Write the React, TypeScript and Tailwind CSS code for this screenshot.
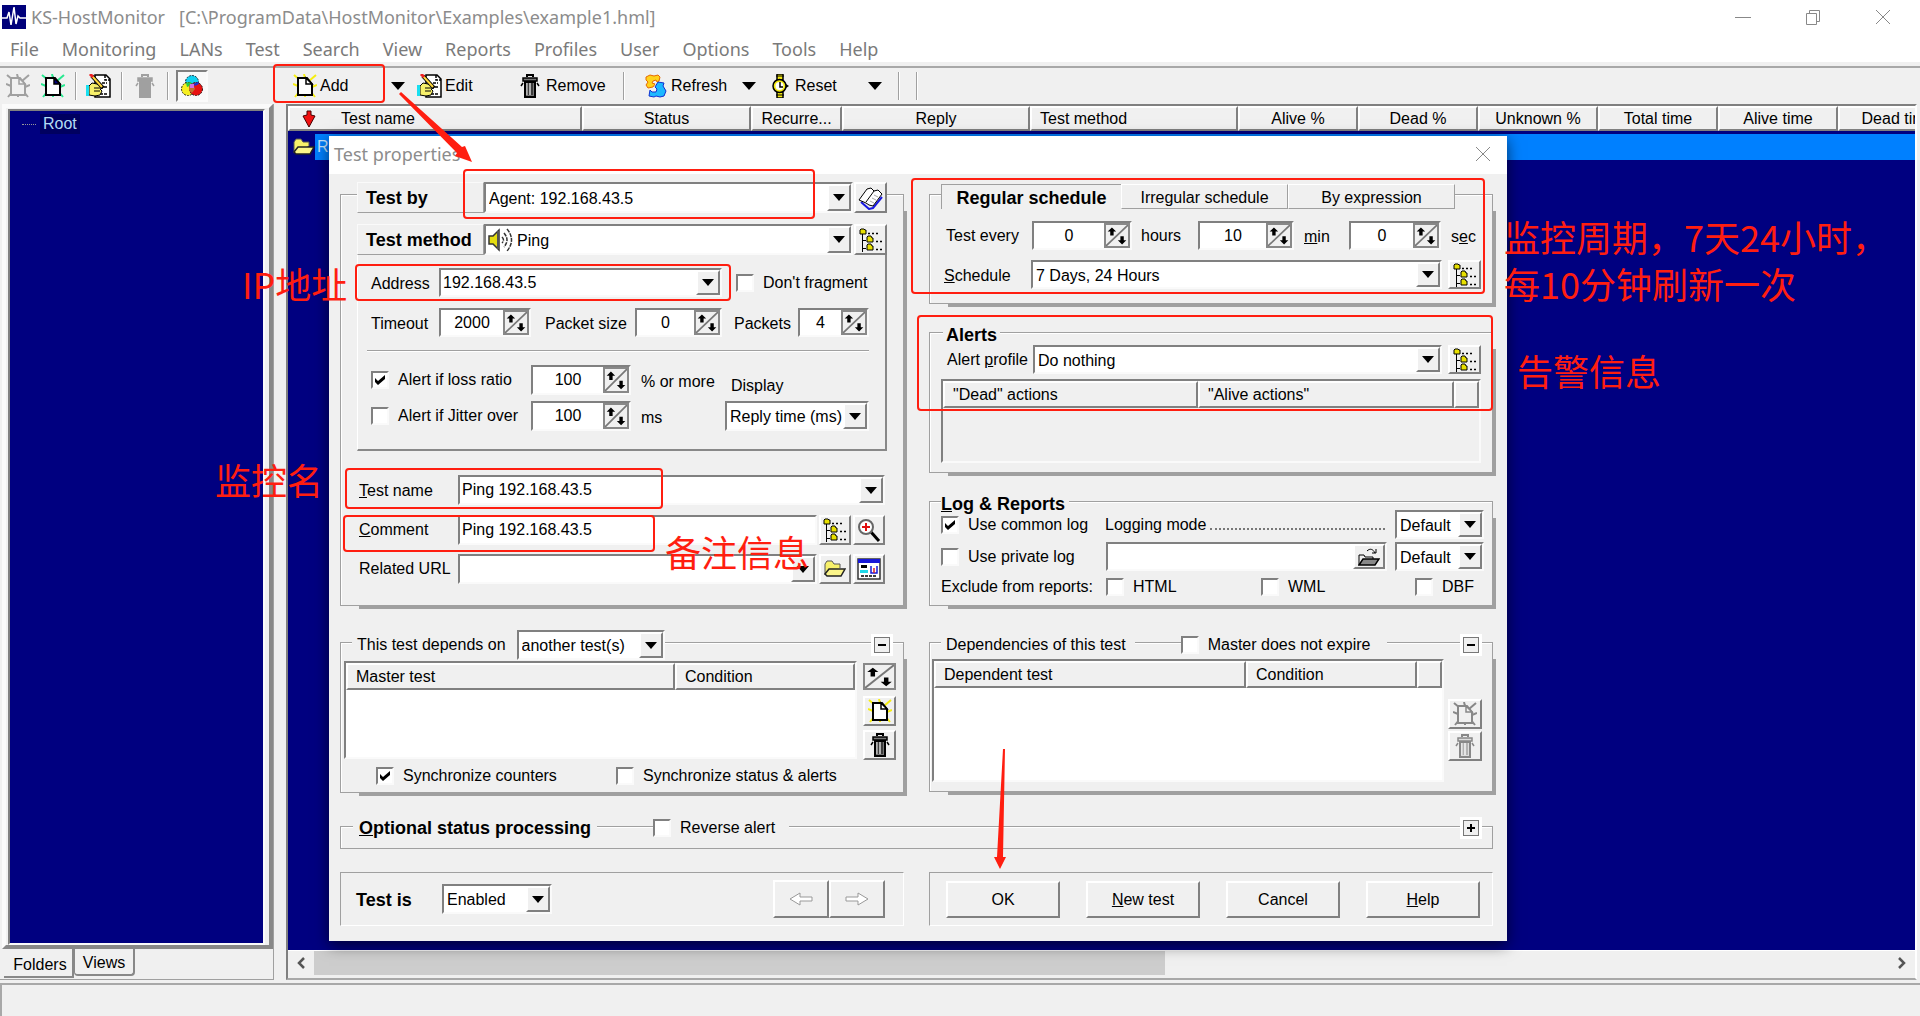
import type { ReactNode } from 'react';
import clsx from 'clsx';

const SUNKEN = 'border-2 border-t-[#808080] border-l-[#808080] border-r-[#fafafa] border-b-[#fafafa]';
const RAISED = 'border-2 border-t-white border-l-white border-r-[#808080] border-b-[#808080]';

const MENU = ['File', 'Monitoring', 'LANs', 'Test', 'Search', 'View', 'Reports', 'Profiles', 'User', 'Options', 'Tools', 'Help'];

/* ---------- icons ---------- */

function NewSheetIcon({ burst, line = '#000', fill = '#fff', fold = fill }: { burst: string; line?: string; fill?: string; fold?: string }) {
  return (
    <svg viewBox="0 0 24 24" className="size-6 shrink-0" fill="none">
      <path d="M1 1l6 5M11 0l1 4M23 1l-7 6M0 10l5 2M19 13l5-2M2 23l4-5M12 19v4M22 23l-4-5" stroke={burst} strokeWidth="2" />
      <path d="M5 4h9l5 6v11H5z" fill={fill} stroke={line} strokeWidth="2" />
      <path d="M13 4v6h6z" fill={fold} stroke={line} strokeWidth="1.5" />
    </svg>
  );
}

function EditIcon() {
  return (
    <svg viewBox="0 0 26 24" className="h-6 w-[26px] shrink-0" fill="none">
      <path d="M9 1h11l4 4v18H9z" fill="#fff" stroke="#000" strokeWidth="1.5" />
      <path d="M19 1v5h5M16 9h5M18 13h4M14 20h8" stroke="#000" strokeWidth="1.5" strokeDasharray="3 1" />
      <path d="M3 12l3-3 5 1 6 2v2l-3 1 2 2-2 4-5 1-6-1z" fill="#f7f06a" stroke="#000" />
      <path d="M8 14h6M8 17h6" stroke="#000" />
      <path d="M0 11h3v11H0z" fill="#19dff0" />
      <path d="M6 2l11 12" stroke="#000" strokeWidth="4" />
      <path d="M6 2l10 11" stroke="#ffd83c" strokeWidth="2" />
      <path d="M4 0l3 3" stroke="#e22" strokeWidth="3" />
    </svg>
  );
}

function TrashIcon({ color = '#000', body = '#777' }: { color?: string; body?: string }) {
  return (
    <svg viewBox="0 0 20 24" className="h-6 w-5 shrink-0" fill="none">
      <path d="M7 3V1h6v2" stroke={color} strokeWidth="2" />
      <path d="M3 4h14v3H3z" fill={body} stroke={color} strokeWidth="1.5" />
      <path d="M3 9l-2 3M17 9l2 3" stroke={color} strokeWidth="1.5" />
      <path d="M5 8h10v15H5z" fill={body} stroke={color} strokeWidth="2" />
      <path d="M8 9v12M12 9v12" stroke={color} strokeWidth="1" />
      <path d="M7 9v12M10 9v12" stroke={color === body ? body : '#eee'} strokeWidth="1" />
    </svg>
  );
}

function ColorsIcon() {
  return (
    <svg viewBox="0 0 24 24" className="size-6">
      <circle cx="12" cy="8" r="6.500" fill="#10d0f0" stroke="#134" strokeDasharray="2 1" />
      <circle cx="8" cy="15" r="6.500" fill="#f5ee20" stroke="#331" strokeDasharray="2 1" />
      <circle cx="16" cy="15" r="6.500" fill="#e81010" stroke="#311" strokeDasharray="2 1" />
      <path d="M6 9l5-1 1 3-5 2z" fill="#28c840" />
      <path d="M13 10l5-2 1 2-4 2z" fill="#2030d0" />
      <path d="M9 11l4-1 2 5-3 4-3-3z" fill="#c07030" />
      <path d="M10 10h4v4h-4z" fill="#d070e0" />
    </svg>
  );
}

function RefreshIcon() {
  return (
    <svg viewBox="0 0 22 24" className="h-6 w-[22px] shrink-0">
      <path d="M1 3l4-2 4 1 4-1 2 2-1 4-2 1-1-2-3 1-1 2 3 1-2 3-5 1-2-3 2-3-2-2z" fill="#ffd21c" stroke="#e66a00" />
      <path d="M13 8l6 1-1 3 3 5-2 5-4 1-4-1-2 1-5-1 1-6 2 2 4 0 1-3-2-2z" fill="#1cb8ff" stroke="#1030d0" />
    </svg>
  );
}

function WatchIcon() {
  return (
    <svg viewBox="0 0 18 24" className="h-6 w-[18px] shrink-0">
      <path d="M6 0h6v6H6zM6 18h6v6H6z" fill="#f4ea10" stroke="#000" strokeWidth="1.500" />
      <path d="M5 2h8M5 21h8" stroke="#000" />
      <circle cx="8.500" cy="12" r="6.500" fill="#f4ea10" stroke="#000" strokeWidth="1.500" />
      <circle cx="8.500" cy="12" r="4" fill="#fff" />
      <path d="M9 8v5h3" fill="none" stroke="#000" strokeWidth="1.500" />
      <path d="M15 10l3 2-3 2z" />
    </svg>
  );
}

function BookIcon() {
  return (
    <svg viewBox="0 0 26 24" className="h-6 w-[26px]">
      <path d="M3 16l8 7 4-1 9-11" fill="none" stroke="#1818e0" strokeWidth="2" />
      <path d="M1 14L9 3l4-1 3 3 4-1 4 4-9 12-4-1-3-2z" fill="#fff" stroke="#000" strokeWidth="1" />
      <path d="M8 16l8-11" stroke="#000" />
      <path d="M14 12l4 2M16 9l4 2M12 15l4 2" stroke="#aaa" />
    </svg>
  );
}

function TreeIcon() {
  return (
    <svg viewBox="0 0 24 24" className="size-6" fill="none">
      <path d="M3.500 5v19M3 12.500h4M3 20.500h4" stroke="#000" strokeWidth="1" />
      <path d="M2 1h3l1 1h1v4H1V2zM9 8h3l1 2h1v4H8V9zM9 16h3l1 2h1v4H8v-5z" fill="#e8e000" stroke="#000" strokeWidth="1" />
      <path d="M9 5.500h2M13 5.500h2M17 5.500h2M17 13.500h2M21 13.500h2M17 21.500h2M21 21.500h2" stroke="#000" strokeWidth="1.500" />
    </svg>
  );
}

function ZoomIcon() {
  return (
    <svg viewBox="0 0 24 24" className="size-6" fill="none">
      <path d="M14 14l8 9" stroke="#000" strokeWidth="3" />
      <circle cx="9" cy="9" r="7" fill="#fff" stroke="#666" strokeWidth="2" />
      <path d="M9 5v8M5 9h8" stroke="#e01010" strokeWidth="2" />
    </svg>
  );
}

function FolderIcon() {
  return (
    <svg viewBox="0 0 22 18" className="h-[18px] w-[22px]">
      <path d="M1 15V4l2-3h5l2 3h6v4" fill="#f7f06a" stroke="#555" strokeWidth="1" />
      <path d="M3 16l-2-2 4-5h16l-4 7z" fill="#fbf58a" stroke="#222" strokeWidth="1.500" />
    </svg>
  );
}

function OpenIcon() {
  return (
    <svg viewBox="0 0 22 18" className="h-[18px] w-[22px]">
      <path d="M1 17V7h5l1 2h8v2" fill="#eee" stroke="#000" strokeWidth="1" />
      <path d="M1 17l4-6h16l-4 6z" fill="#888" stroke="#000" strokeWidth="1.500" />
      <path d="M9 3c3-3 6-2 8 2M18 1v4h-4" fill="none" stroke="#000" strokeWidth="1" />
    </svg>
  );
}

function ReportIcon() {
  return (
    <svg viewBox="0 0 24 22" className="h-[22px] w-6">
      <path d="M1 1h22v20H1z" fill="#fff" stroke="#333" strokeWidth="1.500" />
      <path d="M1 1h22v4H1z" fill="#1818d8" />
      <path d="M4 7h6v3H4z" />
      <path d="M3 12h8v3H3z" fill="#20d8e8" />
      <path d="M14 8v7h6V8" fill="none" stroke="#1818d8" strokeWidth="1.500" />
      <path d="M17 10v5" stroke="#e02020" strokeWidth="1.500" />
      <path d="M4 18h16" stroke="#000" strokeWidth="1.500" strokeDasharray="3 1" />
    </svg>
  );
}

function SpeakerIcon() {
  return (
    <svg viewBox="0 0 26 24" className="h-6 w-[26px] shrink-0">
      <path d="M1 8h4l6-6v20l-6-6H1z" fill="#e4dc10" stroke="#333" strokeWidth="1.500" />
      <path d="M10 3v18" stroke="#555" strokeWidth="2" />
      <path d="M14 9c2 2 2 4 0 6M16 5c4 5 4 9 0 14M19 1c6 7 6 15 0 22" fill="none" stroke="#333" strokeDasharray="4 1" strokeWidth="1.500" />
    </svg>
  );
}

function SwapIcon() {
  return (
    <svg viewBox="0 0 26 26" preserveAspectRatio="none" className="h-full w-full">
      <path d="M0 26L26 0" stroke="#777" strokeWidth="2" />
      <path d="M7 3l-5 5h3v5h4V8h3zM19 24l5-5h-3v-5h-4v5h-3z" />
    </svg>
  );
}

function CloseIcon() {
  return (
    <svg viewBox="0 0 16 16" className="size-4" fill="none" stroke="#888">
      <path d="M1 1l14 14M15 1L1 15" />
    </svg>
  );
}

function DownTriangle() {
  return (
    <svg viewBox="0 0 14 8" className="h-2 w-[14px]">
      <path d="M0 0h14L7 8z" />
    </svg>
  );
}

/* ---------- controls ---------- */

function ArrowFace() {
  return (
    <svg viewBox="0 0 12 7" className="h-[7px] w-3">
      <path d="M0 0h12L6 7z" />
    </svg>
  );
}

function Select({ id, value, className, icon, label }: { id: string; value: string; className?: string; icon?: ReactNode; label?: string }) {
  return (
    <div className={clsx('flex items-center bg-white', SUNKEN, className)}>
      {icon}
      <select id={id} aria-label={label} className="h-full min-w-0 flex-1 appearance-none pt-[2px] pl-[3px] outline-none">
        <option>{value}</option>
      </select>
      <span className={clsx('pointer-events-none grid h-full w-6 shrink-0 place-items-center bg-[#f0f0f0]', RAISED)}>
        <ArrowFace />
      </span>
    </div>
  );
}

function ComboInput({ id, value, className }: { id: string; value: string; className?: string }) {
  return (
    <div className={clsx('flex items-center bg-white', SUNKEN, className)}>
      <input id={id} type="text" defaultValue={value} className="h-full min-w-0 flex-1 pl-[2px] outline-none" />
      <button type="button" aria-label="Open list" className={clsx('grid h-full w-6 shrink-0 place-items-center bg-[#f0f0f0]', RAISED)}>
        <ArrowFace />
      </button>
    </div>
  );
}

function Spinner({ id, value, className }: { id: string; value: string; className?: string }) {
  return (
    <div className={clsx('flex shrink-0 items-stretch bg-white', SUNKEN, className)}>
      <input id={id} type="text" defaultValue={value} className="min-w-0 flex-1 text-center outline-none" />
      <button type="button" aria-label="Change value" className="w-[26px] shrink-0 border-2 border-[#888] bg-[#f0f0f0]">
        <SwapIcon />
      </button>
    </div>
  );
}

function Check({ children, checked, className }: { children: ReactNode; checked?: boolean; className?: string }) {
  return (
    <label className={clsx('flex items-center gap-[9px] whitespace-nowrap', className)}>
      <span className={clsx('grid size-[18px] shrink-0 place-items-center bg-white', SUNKEN)}>
        <input type="checkbox" defaultChecked={checked} className="peer col-start-1 row-start-1 size-full appearance-none" />
        <svg viewBox="0 0 12 12" className="pointer-events-none col-start-1 row-start-1 hidden size-3 peer-checked:block">
          <path d="M1 4l3 3 7-6v4l-7 6-3-3z" />
        </svg>
      </span>
      {children}
    </label>
  );
}

function IconButton({ label, children, className }: { label: string; children: ReactNode; className?: string }) {
  return (
    <button type="button" aria-label={label} className={clsx('grid shrink-0 place-items-center bg-[#f0f0f0]', RAISED, className)}>
      {children}
    </button>
  );
}

function PushButton({ children }: { children: ReactNode }) {
  return (
    <button type="button" className={clsx('h-[37px] w-[114px] bg-[#f0f0f0] pt-[2px]', RAISED)}>
      {children}
    </button>
  );
}

function Group({ children, className }: { children: ReactNode; className?: string }) {
  return (
    <section
      className={clsx(
        'relative border border-[#a0a0a0] shadow-[inset_1px_1px_0_#fff]',
        'before:absolute before:top-4 before:-right-[4px] before:-bottom-[4px] before:w-[3px] before:bg-[#a0a0a0]',
        'after:absolute after:-right-[4px] after:-bottom-[4px] after:left-[18px] after:h-[3px] after:bg-[#a0a0a0]',
        className,
      )}
    >
      {children}
    </section>
  );
}

function Fold({ sign }: { sign: string }) {
  return (
    <button type="button" aria-label="Fold section" className="relative grid size-[22px] place-items-center border-4 border-white bg-[#f0f0f0] outline-1 -outline-offset-4 outline-[#777]">
      <svg viewBox="0 0 10 10" className="size-[10px]" stroke="#000" strokeWidth="2">
        <path d={sign === '+' ? 'M1 5h8M5 1v8' : 'M1 5h8'} />
      </svg>
    </button>
  );
}

function ListTable({ heads, cols, className, label }: { heads: string[]; cols: string[]; className?: string; label: string }) {
  return (
    <div className={clsx('overflow-hidden', SUNKEN, className)}>
      <table aria-label={label} className="w-full table-fixed border-separate border-spacing-0">
        <thead>
          <tr>
            {heads.map((head, i) => (
              <th key={i} className={clsx('h-[27px] bg-[#f0f0f0] pl-2 text-left font-normal', RAISED, cols[i])}>
                {head}
              </th>
            ))}
          </tr>
        </thead>
      </table>
    </div>
  );
}

/* ---------- main window ---------- */

function TitleBar() {
  return (
    <header className="bg-white">
      <div className="flex h-9 items-center pb-[3px] pl-[2px] font-['Noto_Sans','Open_Sans',sans-serif] text-[18px] text-[#8c8c8c]">
        <svg viewBox="0 0 24 24" className="size-6 bg-[#00007a]" fill="none" stroke="#fff" strokeWidth="1.500">
          <path d="M0 13h5l2-6 2 13 3-18 2 17 2-8 2 2h6" />
        </svg>
        <h1 className="ml-[5px] whitespace-pre">KS-HostMonitor   [C:\ProgramData\HostMonitor\Examples\example1.hml]</h1>
        <div className="ml-auto flex items-center gap-[54px] pr-[29px]">
          <button type="button" aria-label="Minimize">
            <svg viewBox="0 0 16 16" className="size-4" stroke="#888"><path d="M0 8.500h16" /></svg>
          </button>
          <button type="button" aria-label="Restore">
            <svg viewBox="0 0 16 16" className="size-4" fill="none" stroke="#888"><path d="M1.500 4.500h10v11h-10zM4.500 4.500v-3h10v11h-3" /></svg>
          </button>
          <button type="button" aria-label="Close"><CloseIcon /></button>
        </div>
      </div>
      <nav className="flex h-[26px] items-center gap-[23px] pl-[10px] font-['Noto_Sans','Open_Sans',sans-serif] text-[18px] text-[#7a7a7a]">
        {MENU.map(item => <button key={item} type="button">{item}</button>)}
      </nav>
    </header>
  );
}

function Separator({ className }: { className?: string }) {
  return <span className={clsx('h-7 w-[2px] shrink-0 border-r border-white bg-[#a0a0a0]', className)} />;
}

function ToolBar() {
  return (
    <div className="bg-[#f0f0f0] pt-1">
      <div className="flex h-[38px] items-center border-t-2 border-[#a8a8a8]">
        <div className="flex w-[290px] shrink-0 items-center pl-[6px]">
          <button type="button" aria-label="New subfolder"><NewSheetIcon burst="#a0a0a0" line="#a0a0a0" fill="#f0f0f0" /></button>
          <button type="button" aria-label="New folder" className="ml-[11px]"><NewSheetIcon burst="#28e890" fold="#000080" /></button>
          <Separator className="ml-[10px]" />
          <button type="button" aria-label="Edit folder" className="ml-[9px]"><EditIcon /></button>
          <Separator className="ml-[9px]" />
          <button type="button" aria-label="Remove folder" className="ml-[12px]"><TrashIcon color="#a0a0a0" body="#a0a0a0" /></button>
          <Separator className="ml-[12px]" />
          <button type="button" aria-label="Colors" className={clsx('ml-[7px] grid size-8 place-items-center bg-[#f8f8f8]', SUNKEN)}><ColorsIcon /></button>
        </div>
        <button type="button" className="flex w-[98px] items-center gap-[3px] pl-[3px]"><NewSheetIcon burst="#f6ee10" />Add</button>
        <button type="button" aria-label="Add menu" className="w-[27px] pl-[3px]"><DownTriangle /></button>
        <button type="button" className="flex w-[105px] items-center gap-[2px] pl-[2px]"><EditIcon />Edit</button>
        <button type="button" className="flex w-[103px] items-center gap-[6px]"><TrashIcon />Remove</button>
        <Separator />
        <button type="button" className="ml-[20px] flex w-[97px] items-center gap-1"><RefreshIcon />Refresh</button>
        <button type="button" aria-label="Refresh menu" className="w-[29px]"><DownTriangle /></button>
        <button type="button" className="flex w-[97px] items-center gap-[6px]"><WatchIcon />Reset</button>
        <button type="button" aria-label="Reset menu"><DownTriangle /></button>
        <Separator className="ml-[16px]" />
        <Separator className="ml-[16px]" />
      </div>
    </div>
  );
}

function FolderPane() {
  return (
    <aside className="flex w-[274px] shrink-0 flex-col border-r border-b border-[#a0a0a0]">
      <div className="ml-[2px] flex flex-1 flex-col border-4 border-t-[#fafafa] border-r-[#888] border-b-[#888] border-l-[#fafafa] pt-px pr-1 pl-[2px]">
        <div className={clsx('flex-1 bg-[#000080] text-[#b4dcf4]', SUNKEN)}>
          <div className="flex items-center pt-[3px] pl-[12px]">
            <span className="w-[14px] border-t border-dotted border-[#999]" />
            <span className="ml-1 bg-[#000060] px-[3px]">Root</span>
          </div>
        </div>
      </div>
      <div className="flex h-[30px] items-start pl-1">
        <button type="button" className="h-[29px] w-[70px] border-r-2 border-b-2 border-[#888] pt-1 pl-1">Folders</button>
        <button type="button" className="h-[27px] w-[61px] rounded-b border-r-2 border-b-2 border-l border-[#888] pt-[2px]">Views</button>
      </div>
    </aside>
  );
}

const COLUMNS = [
  { name: 'Test name', cls: 'w-[294px] text-left' },
  { name: 'Status', cls: 'w-[169px] text-center' },
  { name: 'Recurre...', cls: 'w-[91px] text-center' },
  { name: 'Reply', cls: 'w-[188px] text-center' },
  { name: 'Test method', cls: 'w-[208px] text-left pl-2' },
  { name: 'Alive %', cls: 'w-[120px] text-center' },
  { name: 'Dead %', cls: 'w-[120px] text-center' },
  { name: 'Unknown %', cls: 'w-[120px] text-center' },
  { name: 'Total time', cls: 'w-[120px] text-center' },
  { name: 'Alive time', cls: 'w-[120px] text-center' },
  { name: 'Dead time', cls: 'w-[120px] text-center' },
];

function TestList() {
  return (
    <main className="mr-[3px] ml-3 flex min-w-0 flex-1 flex-col border-2 border-t-[#808080] border-r-white border-b-[#a8a8a8] border-l-[#808080]">
      <div className="flex-1 overflow-hidden bg-[#000080]">
        <table className="w-[1670px] table-fixed border-separate border-spacing-0">
          <thead>
            <tr>
              {COLUMNS.map((col, i) => (
                <th key={col.name} className={clsx('h-[25px] bg-[#f0f0f0] font-normal', RAISED, col.cls)}>
                  {i === 0 ? (
                    <span className="flex items-center gap-[25px] pl-3">
                      <svg viewBox="0 0 14 18" className="h-[18px] w-[14px]"><path d="M5 1h4v4l4 1-6 11L1 6l4-1z" fill="#f01010" stroke="#400" /></svg>
                      {col.name}
                    </span>
                  ) : col.name}
                </th>
              ))}
            </tr>
          </thead>
          <tbody>
            <tr>
              <td colSpan={11} className="p-0 pt-[3px]">
                <div className="flex items-center pl-[5px]">
                  <span className="w-[22px] shrink-0"><FolderIcon /></span>
                  <span className="h-[26px] flex-1 bg-[#0080ff] pl-[2px] leading-[26px] text-[#c4e4ff]">R</span>
                </div>
              </td>
            </tr>
          </tbody>
        </table>
      </div>
      <div className="flex h-[28px] items-start border-t border-white bg-[#f0f0f0]">
        <button type="button" aria-label="Scroll left" className="grid h-6 w-[26px] place-items-center">
          <svg viewBox="0 0 8 12" className="h-3 w-2" fill="none" stroke="#555" strokeWidth="2.500"><path d="M7 1L2 6l5 5" /></svg>
        </button>
        <div className="flex h-6 flex-1"><span className="w-[54%] bg-[#cdcdcd]" /></div>
        <button type="button" aria-label="Scroll right" className="grid h-6 w-[26px] place-items-center">
          <svg viewBox="0 0 8 12" className="h-3 w-2" fill="none" stroke="#555" strokeWidth="2.500"><path d="M1 1l5 5-5 5" /></svg>
        </button>
      </div>
    </main>
  );
}

/* ---------- dialog ---------- */

function MethodPanel() {
  return (
    <div className="border-r-2 border-b-2 border-l border-[#888] border-l-white pt-[13px] pr-4 pb-[18px] pl-[13px]">
      <div className="flex h-[29px] items-center">
        <label htmlFor="address" className="w-[68px] shrink-0 pt-[3px]">Address</label>
        <ComboInput id="address" value="192.168.43.5" className="h-full w-[283px]" />
        <Check className="ml-[14px]">Don't fragment</Check>
      </div>
      <div className="mt-[11px] flex h-[29px] items-center">
        <label htmlFor="timeout" className="w-[68px] shrink-0 pt-[3px]">Timeout</label>
        <Spinner id="timeout" value="2000" className="h-full w-[92px]" />
        <label htmlFor="packet-size" className="ml-[14px] w-[90px] shrink-0 pt-[3px]">Packet size</label>
        <Spinner id="packet-size" value="0" className="h-full w-[87px]" />
        <label htmlFor="packets" className="ml-[12px] w-[64px] shrink-0 pt-[3px]">Packets</label>
        <Spinner id="packets" value="4" className="h-full w-[71px]" />
      </div>
      <hr className="mt-[13px] -ml-1 border-t border-b border-t-[#a0a0a0] border-b-white" />
      <div className="mt-[13px] grid grid-cols-[160px_100px_94px_1fr] items-center gap-y-[6px]">
        <Check checked>Alert if loss ratio</Check>
        <Spinner id="loss" value="100" className="h-[30px]" />
        <label htmlFor="loss" className="pt-[3px] pl-[10px]">% or more</label>
        <label htmlFor="display" className="self-end pl-[6px] leading-[18px]">Display</label>
        <Check>Alert if Jitter over</Check>
        <Spinner id="jitter" value="100" className="h-[30px]" />
        <label htmlFor="jitter" className="pt-[3px] pl-[10px]">ms</label>
        <Select id="display" value="Reply time (ms)" className="h-[30px]" />
      </div>
    </div>
  );
}

function TestGroup() {
  return (
    <Group className="px-4 pb-[21px]">
      <div className="-mt-[13px] flex h-[31px] items-center bg-[#f0f0f0]">
        <label htmlFor="test-by" className="flex h-full w-[127px] shrink-0 items-center border border-t-[#fafafa] border-r-[#a0a0a0] border-b-[#a0a0a0] border-l-[#fafafa] pl-2 text-[18px] font-bold">Test by</label>
        <Select id="test-by" value="Agent: 192.168.43.5" className="h-full flex-1" />
        <IconButton label="Agents" className="ml-[1px] h-full w-[33px]"><BookIcon /></IconButton>
      </div>
      <div className="mt-[11px] flex h-[31px] items-center">
        <label htmlFor="test-method" className="flex h-full w-[127px] shrink-0 items-center border border-t-[#fafafa] border-r-[#a0a0a0] border-b-[#a0a0a0] border-l-[#fafafa] pl-2 text-[18px] font-bold">Test method</label>
        <Select id="test-method" value="Ping" icon={<SpeakerIcon />} className="h-full flex-1 pl-[2px]" />
        <IconButton label="Test methods" className="ml-[1px] h-full w-[33px]"><TreeIcon /></IconButton>
      </div>
      <MethodPanel />
      <div className="mt-6 flex h-[30px] items-center pr-[2px] pl-[2px]">
        <label htmlFor="test-name" className="w-[99px] shrink-0 pt-[2px]"><u>T</u>est name</label>
        <ComboInput id="test-name" value="Ping 192.168.43.5" className="h-full flex-1" />
      </div>
      <div className="mt-[10px] flex h-[30px] items-center pr-[2px] pl-[2px]">
        <label htmlFor="comment" className="w-[99px] shrink-0"><u>C</u>omment</label>
        <input id="comment" type="text" defaultValue="Ping 192.168.43.5" className={clsx('h-full min-w-0 flex-1 bg-white pl-[2px] outline-none', SUNKEN)} />
        <IconButton label="Macros" className="ml-[2px] h-full w-8"><TreeIcon /></IconButton>
        <IconButton label="Preview" className="ml-[2px] h-full w-8"><ZoomIcon /></IconButton>
      </div>
      <div className="mt-[9px] flex h-[30px] items-center pr-[2px] pl-[2px]">
        <label htmlFor="related-url" className="w-[99px] shrink-0">Related URL</label>
        <ComboInput id="related-url" value="" className="h-full flex-1" />
        <IconButton label="Browse" className="ml-[2px] h-full w-8"><FolderIcon /></IconButton>
        <IconButton label="Open page" className="ml-[2px] h-full w-8"><ReportIcon /></IconButton>
      </div>
    </Group>
  );
}

function ScheduleGroup() {
  return (
    <Group className="pr-[11px] pb-[14px] pl-[11px]">
      <div className="-mt-[11px] flex h-[25px] w-[514px] bg-[#f0f0f0]">
        <button type="button" className="w-[180px] border-t border-l border-[#a0a0a0] pt-[2px] text-[18px] font-bold">Regular schedule</button>
        <button type="button" className="w-[167px] border border-t-white border-r-[#a0a0a0] border-b-[#a0a0a0] border-l-white pt-[2px]">Irregular schedule</button>
        <button type="button" className="w-[167px] border border-t-white border-r-[#a0a0a0] border-b-[#a0a0a0] border-l-white pt-[2px]">By expression</button>
      </div>
      <div className="mt-[12px] flex h-[29px] items-center pl-[5px]">
        <label htmlFor="hours" className="w-[86px] shrink-0">Test every</label>
        <Spinner id="hours" value="0" className="h-full w-[100px]" />
        <label htmlFor="hours" className="w-[66px] shrink-0 pl-[9px]">hours</label>
        <Spinner id="min" value="10" className="h-full w-[96px]" />
        <label htmlFor="min" className="w-[55px] shrink-0 pt-[3px] pl-[10px]"><u>m</u>in</label>
        <Spinner id="sec" value="0" className="h-full w-[92px]" />
        <label htmlFor="sec" className="pt-[3px] pl-[10px]">s<u>e</u>c</label>
      </div>
      <div className="mt-[10px] flex h-[29px] items-center pl-[3px]">
        <label htmlFor="schedule" className="w-[87px] shrink-0 pt-[2px]"><u>S</u>chedule</label>
        <Select id="schedule" value="7 Days, 24 Hours" className="h-full flex-1" />
        <IconButton label="Schedules" className="ml-[6px] h-full w-[33px]"><TreeIcon /></IconButton>
      </div>
    </Group>
  );
}

function AlertsGroup() {
  return (
    <Group className="mt-7 pr-[11px] pb-[9px] pl-[11px]">
      <h3 className="-mt-2 ml-[2px] w-max bg-[#f0f0f0] px-[3px] text-[18px] leading-5 font-bold">Alerts</h3>
      <div className="flex h-[29px] items-center pl-[6px]">
        <label htmlFor="alert-profile" className="w-[86px] shrink-0 whitespace-nowrap">Alert <u>p</u>rofile</label>
        <Select id="alert-profile" value="Do nothing" className="h-full flex-1" />
        <IconButton label="Alert profiles" className="ml-[6px] h-full w-[33px]"><TreeIcon /></IconButton>
      </div>
      <ListTable label="Alert actions" heads={['"Dead" actions', '"Alive actions"', '']} cols={['w-[255px]', 'w-[256px]', 'w-auto']} className="mt-[5px] h-[84px]" />
    </Group>
  );
}

function LogGroup() {
  return (
    <Group className="mt-7 pr-2 pb-[9px] pl-[11px]">
      <h3 className="-mt-2 h-4 w-max bg-[#f0f0f0] pr-1 text-[18px] leading-5 font-bold"><u>L</u>og &amp; Reports</h3>
      <div className="flex h-[29px] items-center">
        <Check checked className="w-[164px] shrink-0">Use common log</Check>
        <label htmlFor="log-mode" className="shrink-0">Logging mode</label>
        <span className="mt-2 mr-[10px] ml-1 flex-1 border-b-2 border-dotted border-[#777]" />
        <Select id="log-mode" value="Default" className="h-full w-[89px]" />
      </div>
      <div className="mt-[3px] flex h-[29px] items-center">
        <Check className="w-[165px] shrink-0">Use private log</Check>
        <div className={clsx('flex h-full flex-1 bg-white', SUNKEN)}>
          <input type="text" aria-label="Private log file" className="min-w-0 flex-1 pl-[3px] outline-none" />
          <IconButton label="Browse log" className="w-8"><OpenIcon /></IconButton>
        </div>
        <Select id="private-mode" label="Private log mode" value="Default" className="ml-2 h-full w-[89px]" />
      </div>
      <div className="mt-[7px] flex h-[18px] items-center">
        <span className="w-[165px] shrink-0">Exclude from reports:</span>
        <Check className="w-[155px]">HTML</Check>
        <Check className="w-[154px]">WML</Check>
        <Check>DBF</Check>
      </div>
    </Group>
  );
}

function MasterGroup() {
  return (
    <Group className="pr-[7px] pb-[7px] pl-[3px]">
      <div className="-mt-[13px] flex h-[30px] items-center">
        <label htmlFor="depends" className="ml-[8px] bg-[#f0f0f0] pr-[11px] pl-[5px] whitespace-nowrap">This test depends on</label>
        <Select id="depends" value="another test(s)" className="h-full w-[148px]" />
        <span className="mr-[3px] ml-auto"><Fold sign="-" /></span>
      </div>
      <div className="mt-[1px] flex">
        <ListTable label="Master tests" heads={['Master test', 'Condition']} cols={['w-[329px]', 'w-auto']} className="h-[98px] flex-1 bg-white" />
        <div className="ml-[6px] flex w-[33px] flex-col gap-[4px]">
          <button type="button" aria-label="Reorder" className="mt-[2px] mb-[2px] h-[27px] border-2 border-[#888] bg-[#f0f0f0]"><SwapIcon /></button>
          <IconButton label="Add master" className="h-[30px]"><NewSheetIcon burst="#f6ee10" /></IconButton>
          <IconButton label="Remove master" className="h-[30px]"><TrashIcon /></IconButton>
        </div>
      </div>
      <div className="mt-[7px] flex h-[18px] items-center pl-[32px]">
        <Check checked className="w-[240px]">Synchronize counters</Check>
        <Check>Synchronize status &amp; alerts</Check>
      </div>
    </Group>
  );
}

function DependentGroup() {
  return (
    <Group className="pr-[10px] pb-[9px] pl-[2px]">
      <div className="-mt-[13px] flex h-[29px] items-center">
        <h3 className="ml-[9px] bg-[#f0f0f0] pr-[9px] pl-[5px] whitespace-nowrap">Dependencies of this test</h3>
        <Check className="ml-[46px] bg-[#f0f0f0] pr-[17px]">Master does not expire</Check>
        <span className="ml-auto"><Fold sign="-" /></span>
      </div>
      <div className="flex">
        <ListTable label="Dependent tests" heads={['Dependent test', 'Condition', '']} cols={['w-[312px]', 'w-[171px]', 'w-auto']} className="h-[123px] flex-1 bg-white" />
        <div className="ml-[4px] flex w-[34px] flex-col gap-[2px] pt-10">
          <IconButton label="Add dependent" className="h-[30px]"><NewSheetIcon burst="#888" line="#888" fill="#f0f0f0" /></IconButton>
          <IconButton label="Remove dependent" className="h-[30px]"><TrashIcon color="#888" body="#ddd" /></IconButton>
        </div>
      </div>
    </Group>
  );
}

function PropertiesDialog() {
  return (
    <div role="dialog" aria-label="Test properties" className="absolute top-[136px] left-[329px] w-[1178px] bg-[#f0f0f0] shadow-[0_4px_14px_rgba(0,0,0,0.6)]">
      <div className="flex h-[38px] items-center justify-between bg-white pr-[16px] pb-[2px] pl-[5px]">
        <h2 className="font-['Noto_Sans','Open_Sans',sans-serif] text-[18px] text-[#8c8c8c]">Test properties</h2>
        <button type="button" aria-label="Close dialog"><CloseIcon /></button>
      </div>
      <form className="grid grid-cols-2 gap-x-[25px] pt-5 pr-[14px] pb-[15px] pl-[11px]">
        <TestGroup />
        <div>
          <ScheduleGroup />
          <AlertsGroup />
          <LogGroup />
        </div>
        <div className="mt-9"><MasterGroup /></div>
        <div className="mt-9"><DependentGroup /></div>

        <section className="col-span-2 mt-[33px] h-[23px] border border-[#a0a0a0] shadow-[inset_1px_1px_0_#fff]">
          <div className="-mt-[9px] flex h-5 items-center">
            <h3 className="ml-3 bg-[#f0f0f0] px-[6px] text-[18px] font-bold"><u>O</u>ptional status processing</h3>
            <Check className="ml-[56px] bg-[#f0f0f0] pr-[14px]">Reverse alert</Check>
            <span className="mr-[10px] ml-auto"><Fold sign="+" /></span>
          </div>
        </section>

        <section className="mt-[23px] flex h-[54px] items-center border border-t-[#a0a0a0] border-r-white border-b-white border-l-[#a0a0a0] pr-[18px] pl-[15px]">
          <label htmlFor="test-is" className="w-[86px] pt-[2px] text-[18px] font-bold">Test is</label>
          <Select id="test-is" value="Enabled" className="h-[30px] w-[110px]" />
          <IconButton label="Previous test" className="ml-auto h-[38px] w-14">
            <svg viewBox="0 0 24 14" className="h-[14px] w-6" fill="#fff" stroke="#999"><path d="M1 7l10-6v4h12v4H11v4z" /></svg>
          </IconButton>
          <IconButton label="Next test" className="h-[38px] w-14">
            <svg viewBox="0 0 24 14" className="h-[14px] w-6" fill="#fff" stroke="#999"><path d="M23 7L13 1v4H1v4h12v4z" /></svg>
          </IconButton>
        </section>
        <section className="mt-[23px] flex h-[54px] items-center justify-between border border-t-[#a0a0a0] border-r-white border-b-white border-l-[#a0a0a0] pr-[12px] pl-[16px]">
          <PushButton>OK</PushButton>
          <PushButton><u>N</u>ew test</PushButton>
          <PushButton>Cancel</PushButton>
          <PushButton><u>H</u>elp</PushButton>
        </section>
      </form>
    </div>
  );
}

/* ---------- red notes drawn over the windows ---------- */

const FRAMES = [
  'left-[273px] top-[64px] w-[112px] h-[39px]',
  'left-[463px] top-[169px] w-[352px] h-[50px]',
  'left-[355px] top-[264px] w-[376px] h-[37px]',
  'left-[345px] top-[468px] w-[318px] h-[41px]',
  'left-[343px] top-[515px] w-[312px] h-[37px]',
  'left-[911px] top-[178px] w-[574px] h-[116px]',
  'left-[917px] top-[315px] w-[576px] h-[96px]',
];

function Notes() {
  return (
    <div className="pointer-events-none absolute inset-0 overflow-hidden font-['Noto_Sans_CJK_SC',sans-serif] text-[36px] leading-[47px] whitespace-nowrap text-[#ff1e10]">
      {FRAMES.map(frame => <div key={frame} className={clsx('absolute rounded-[4px] border-2 border-[#ff1e10]', frame)} />)}
      <p className="absolute top-[260px] left-[242px]">IP地址</p>
      <p className="absolute top-[456px] left-[215px]">监控名</p>
      <p className="absolute top-[528px] left-[665px]">备注信息</p>
      <p className="absolute top-[213px] left-[1504px]">监控周期，7天24小时，<br />每10分钟刷新一次</p>
      <p className="absolute top-[347px] left-[1517px]">告警信息</p>
      <svg viewBox="0 0 1010 880" className="absolute top-0 left-0 h-[880px] w-[1010px]" fill="#ff1e10">
        <path d="M399 94l2-2 61 55 3-1 7 16-17-6 2-3z" />
        <path d="M1003 749h2l-2 108h3l-6 12-6-12h3z" />
      </svg>
    </div>
  );
}

export default function App() {
  return (
    <div className="relative flex min-h-screen flex-col overflow-hidden bg-[#f0f0f0] font-['Liberation_Sans',Arial,sans-serif] text-[16px] leading-5 text-black">
      <TitleBar />
      <ToolBar />
      <div className="flex flex-1">
        <FolderPane />
        <TestList />
      </div>
      <footer className="mt-[3px] h-[33px] border-t-2 border-l-2 border-[#a8a8a8]" />
      <PropertiesDialog />
      <Notes />
    </div>
  );
}
